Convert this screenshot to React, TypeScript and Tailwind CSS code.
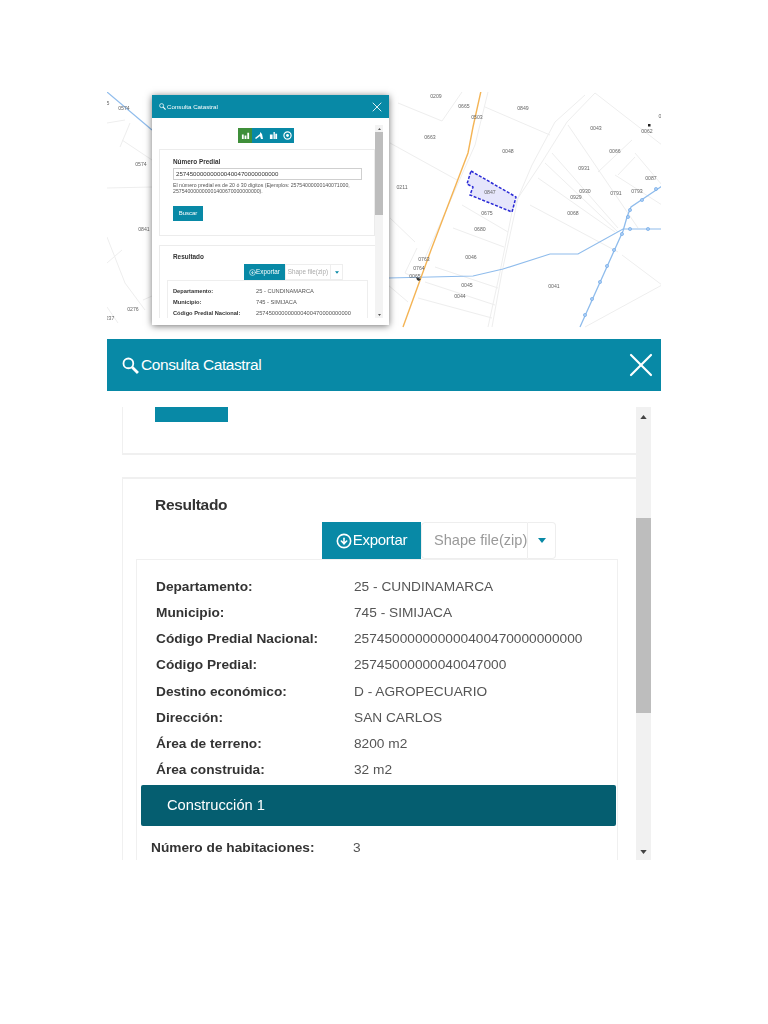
import { CircleArrowDown, X } from 'lucide-react';

const CODE = '257450000000000400470000000000';

const rows = [
  ['Departamento:', '25 - CUNDINAMARCA'],
  ['Municipio:', '745 - SIMIJACA'],
  ['Código Predial Nacional:', CODE],
  ['Código Predial:', '25745000000040047000'],
  ['Destino económico:', 'D - AGROPECUARIO'],
  ['Dirección:', 'SAN CARLOS'],
  ['Área de terreno:', '8200 m2'],
  ['Área construida:', '32 m2'],
];

// page coordinates, the svg viewBox starts at the map's corner
const mapLabels: [string, number, number][] = [
  ['0209', 436, 96], ['0665', 464, 106], ['0503', 477, 117], ['0849', 523, 108],
  ['0663', 430, 137], ['0043', 596, 128], ['0062', 647, 131], ['0048', 508, 151],
  ['0066', 615, 151], ['0931', 584, 168], ['0087', 651, 178], ['0211', 402, 187],
  ['0847', 490, 192], ['0930', 585, 191], ['0929', 576, 197], ['0791', 616, 193],
  ['0793', 637, 191], ['0675', 487, 213], ['0068', 573, 213], ['0680', 480, 229],
  ['0046', 471, 257], ['0763', 424, 259], ['0764', 419, 268], ['0065', 415, 276],
  ['0045', 467, 285], ['0044', 460, 296], ['0041', 554, 286], ['0574', 124, 108],
  ['0574', 141, 164], ['0841', 144, 229], ['0276', 133, 309], ['5', 108, 103],
  ['237', 110, 318], ['0', 660, 116],
];

const parcels = [
  'M398 103L442 121L462 92', 'M390 143L457 180', 'M488 92L475 145L425 258', 'M485 107L550 135',
  'M595 93L567 122L542 162L518 198L502 272L492 327', 'M585 95L555 122L532 165L512 212L500 272L488 327',
  'M568 125L638 228', 'M552 153L618 228', 'M545 163L618 232', 'M538 178L615 232', 'M530 205L618 252',
  'M595 93L662 145', 'M632 140L598 172', 'M618 175L635 157', 'M635 153L662 185', 'M615 175L662 205',
  'M622 255L662 285', 'M662 285L585 327', 'M462 205L508 232', 'M453 228L504 247', 'M435 267L498 288',
  'M425 282L495 305', 'M418 298L492 318', 'M417 248L405 273L415 278', 'M390 218L415 242', 'M388 285L408 302',
  'M125 120L107 123', 'M130 123L120 147', 'M122 140L152 160', 'M107 188L152 187', 'M107 237L125 283L145 310',
  'M107 263L122 250', 'M143 300L152 296', 'M107 307L118 323',
];

const markers = [
  [585, 315], [592, 299], [600, 282], [607, 266], [614, 250], [622, 234], [628, 217], [630, 210],
  [642, 200], [656, 189], [630, 229], [648, 229],
];

function SearchGlyph({ className }: { className: string }) {
  return (
    <svg viewBox="0 0 16 16" className={className}>
      <circle cx="6" cy="6" r="4.6" fill="none" stroke="white" strokeWidth="1.7" />
      <path d="M9.6 9.6L15 15" stroke="white" strokeWidth="2.6" />
    </svg>
  );
}

function ToolbarIcon({ kind }: { kind: 'bars' | 'tool' | 'build' | 'help' }) {
  if (kind === 'help') {
    return (
      <svg viewBox="0 0 10 10" className="w-[9px] h-[9px]">
        <circle cx="5" cy="5" r="4" fill="none" stroke="white" strokeWidth="1.3" />
        <circle cx="5" cy="5" r="1.6" fill="white" />
      </svg>
    );
  }
  if (kind === 'tool') {
    return (
      <svg viewBox="0 0 10 10" className="w-[10px] h-[10px]">
        <path d="M1 7L6 3L6 1L8 3L9 8L7 8L6 5L2 8Z" fill="white" />
      </svg>
    );
  }
  return (
    <svg viewBox="0 0 10 10" className="w-[9px] h-[9px]">
      <path
        d={kind === 'bars' ? 'M1 4h2v5H1zM4 5h2v4H4zM7 2h2v7H7z' : 'M1 4h3v5H1zM5 1h1.5v8H5zM7 3h2v6H7z'}
        fill="white"
      />
    </svg>
  );
}

function MapFigure() {
  return (
    <div className="relative w-[554px] h-[236px] blur-[0.6px]">
      <svg viewBox="107 92 554 236" className="w-full h-full block bg-white">
        {parcels.map((d) => (
          <path key={d} d={d} fill="none" stroke="#eeeeee" strokeWidth="1" />
        ))}
        <path d="M107 92L152 130" fill="none" stroke="#8fbcec" strokeWidth="1.2" />
        <path
          d="M388 278L473 276L503 269L550 254L578 254L623 229L662 229"
          fill="none"
          stroke="#8fbcec"
          strokeWidth="1.2"
        />
        <path d="M580 327L623 231L627 217L631 207L662 186" fill="none" stroke="#8fbcec" strokeWidth="1.3" />
        {markers.map(([cx, cy]) => (
          <circle key={`${cx}-${cy}`} cx={cx} cy={cy} r="1.6" fill="#a9cdf3" stroke="#6aa5e6" strokeWidth="0.6" />
        ))}
        <path d="M481 91L473 127L468 153L431 250L403 327" fill="none" stroke="#f4b455" strokeWidth="1.4" />
        <path
          d="M471 171L516 197L512 212L470 195L473 187L467 184Z"
          fill="#e6e6fb"
          stroke="#2a2ad6"
          strokeWidth="1.5"
          strokeDasharray="3 1.6"
        />
        <path d="M416 277L421 279L419 281L417 280Z" fill="#333" />
        <rect x="648" y="124" width="2.5" height="2.5" fill="#222" />
        {mapLabels.map(([t, x, y]) => (
          <text
            key={`${t}-${x}`}
            x={x}
            y={y + 2}
            textAnchor="middle"
            fontSize="5.2"
            fill="#666"
            fontFamily="'Liberation Sans', sans-serif"
          >
            {t}
          </text>
        ))}
      </svg>

      {/* small dialog floating over the map */}
      <div className="absolute top-[3px] left-[45px] w-[237px] h-[230px] bg-white shadow-[0_1px_7px_rgba(0,0,0,0.55)] flex flex-col">
        <div className="h-[23px] bg-[#0889a6] flex items-center justify-between pl-[7px] pr-[4px] text-white">
          <div className="flex items-center gap-[1px] text-[6.2px]">
            <SearchGlyph className="w-[7px] h-[7px]" />
            <span>Consulta Catastral</span>
          </div>
          <X size={16} strokeWidth={1.3} />
        </div>
        <div className="flex flex-1 pt-[7px] pb-[7px] min-h-0">
          <div className="w-[223px] pl-[7px] overflow-hidden">
            <div className="flex mt-[3px] h-[15px] ml-[79px]">
              <div className="flex w-[56px] bg-[#0889a6]">
                <div className="w-[14px] bg-[#3f8f3a] flex items-center justify-center">
                  <ToolbarIcon kind="bars" />
                </div>
                <div className="w-[14px] flex items-center justify-center">
                  <ToolbarIcon kind="tool" />
                </div>
                <div className="w-[14px] flex items-center justify-center">
                  <ToolbarIcon kind="build" />
                </div>
                <div className="w-[14px] flex items-center justify-center">
                  <ToolbarIcon kind="help" />
                </div>
              </div>
            </div>
            <div className="mt-[6px] h-[87px] border border-[#ececec] pl-[13px] pt-[7px]">
              <p className="text-[6.4px] font-bold text-[#333] leading-[9px]">Número Predial</p>
              <div className="mt-[2px] w-[189px] h-[12px] border border-[#cfcfcf] text-[6.15px] text-[#333] leading-[10px] pl-[2px]">
                {CODE}
              </div>
              <p className="mt-[2px] w-[200px] text-[5.2px] leading-[6px] text-[#555]">
                El número predial es de 20 ó 30 dígitos (Ejemplos: 25754000000140071000,
                257540000000001400670000000000).
              </p>
              <div className="mt-[12px] w-[30px] h-[15px] bg-[#0889a6] text-white text-[6px] flex items-center justify-center">
                Buscar
              </div>
            </div>
            <div className="mt-[9px] h-[80px] border-t border-l border-[#ececec] overflow-hidden">
              <p className="ml-[13px] mt-[6px] text-[6.4px] font-bold text-[#333] leading-[9px]">Resultado</p>
              <div className="ml-[84px] mt-[3px] flex h-[16px] text-[6.3px]">
                <div className="w-[41px] bg-[#0889a6] text-white flex items-center justify-center">
                  <CircleArrowDown size={7} />
                  <span>Exportar</span>
                </div>
                <div className="w-[46px] border border-[#eeeeee] text-[#aaa] whitespace-nowrap flex items-center justify-center">
                  Shape file(zip)
                </div>
                <div className="w-[12px] border border-l-0 border-[#eeeeee] flex items-center justify-center">
                  <svg viewBox="0 0 6 4" className="w-[4px] h-[3px]">
                    <path d="M0 0H6L3 4Z" fill="#0889a6" />
                  </svg>
                </div>
              </div>
              <div className="ml-[7px] w-[201px] border border-[#eeeeee] pt-[5px] pl-[5px]">
                {rows.map(([k, v]) => (
                  <div key={k} className="flex h-[11px] items-center text-[5.7px] whitespace-nowrap">
                    <span className="w-[83px] font-bold text-[#333]">{k}</span>
                    <span className="text-[#555]">{v}</span>
                  </div>
                ))}
              </div>
            </div>
          </div>
          <div className="w-[8px] bg-[#f3f3f3] flex flex-col items-center">
            <div className="h-[7px] flex items-center">
              <svg viewBox="0 0 6 4" className="w-[3px] h-[2px]">
                <path d="M0 4H6L3 0Z" fill="#555" />
              </svg>
            </div>
            <div className="w-full h-[83px] bg-[#bdbdbd]" />
            <div className="flex-1" />
            <div className="h-[7px] flex items-center">
              <svg viewBox="0 0 6 4" className="w-[3px] h-[2px]">
                <path d="M0 0H6L3 4Z" fill="#555" />
              </svg>
            </div>
          </div>
        </div>
      </div>
    </div>
  );
}

function LargeDialog() {
  return (
    <div className="mt-[11px] w-[554px] blur-[0.3px]">
      <div className="h-[52px] bg-[#0889a6] flex items-center justify-between pl-[15px] text-white">
        <div className="flex items-center text-[15.5px] tracking-[-0.4px]">
          <SearchGlyph className="w-[17px] h-[17px] mr-[2px]" />
          <span>Consulta Catastral</span>
        </div>
        <X size={40} strokeWidth={1.3} />
      </div>
      <div className="flex h-[469px] pt-[16px]">
        <div className="w-[529px] pl-[15px] overflow-hidden">
          <div className="h-[48px] border-b-2 border-l border-[#f0f0f0] pl-[32px]">
            <div className="w-[73px] h-[15px] bg-[#0889a6]" />
          </div>
          <div className="mt-[22px] h-[383px] border-t-2 border-l border-[#f0f0f0] overflow-hidden">
            <p className="ml-[32px] mt-[16px] text-[15.5px] leading-[20px] font-bold text-[#333] tracking-[-0.3px]">
              Resultado
            </p>
            <div className="ml-[199px] mt-[7px] flex h-[37px] text-[15px]">
              <div className="w-[99px] bg-[#0889a6] text-white flex items-center justify-center gap-[1px]">
                <CircleArrowDown size={16} strokeWidth={2.4} />
                <span className="tracking-[-0.3px]">Exportar</span>
              </div>
              <div className="w-[107px] border border-[#eeeeee] rounded-l-sm text-[#999] text-[14.6px] whitespace-nowrap flex items-center pl-[12px]">
                Shape file(zip)
              </div>
              <div className="w-[28px] border border-l-0 border-[#eeeeee] rounded-r-sm flex items-center justify-center">
                <svg viewBox="0 0 8 5" className="w-[8px] h-[5px]">
                  <path d="M0 0H8L4 5Z" fill="#0889a6" />
                </svg>
              </div>
            </div>
            <div className="ml-[13px] w-[482px] h-[400px] border border-[#f0f0f0] pt-[14px]">
              {rows.map(([k, v]) => (
                <div key={k} className="flex h-[26.2px] items-center pl-[19px] text-[13.7px]">
                  <span className="w-[198px] font-bold text-[#333]">{k}</span>
                  <span className="text-[#555]">{v}</span>
                </div>
              ))}
              <div className="ml-[4px] mt-[1px] w-[475px] h-[41px] bg-[#055e70] rounded-[2px] flex items-center pl-[26px] text-white text-[14.7px]">
                Construcción 1
              </div>
              <div className="flex h-[42px] mt-[2px] items-center pl-[14px] text-[13.7px]">
                <span className="w-[202px] font-bold text-[#333]">Número de habitaciones:</span>
                <span className="text-[#555]">3</span>
              </div>
            </div>
          </div>
        </div>
        <div className="w-[15px] bg-[#f1f1f1] flex flex-col items-center">
          <div className="h-[20px] flex items-center">
            <svg viewBox="0 0 8 5" className="w-[7px] h-[4px]">
              <path d="M0 5H8L4 0Z" fill="#444" />
            </svg>
          </div>
          <div className="mt-[91px] w-full h-[195px] bg-[#bdbdbd]" />
          <div className="flex-1" />
          <div className="h-[17px] flex items-center">
            <svg viewBox="0 0 8 5" className="w-[7px] h-[4px]">
              <path d="M0 0H8L4 5Z" fill="#444" />
            </svg>
          </div>
        </div>
      </div>
    </div>
  );
}

export default function App() {
  return (
    <div className="w-[768px] h-[1024px] bg-white pt-[92px] pl-[107px] font-['Liberation_Sans',sans-serif] overflow-hidden">
      <MapFigure />
      <LargeDialog />
    </div>
  );
}
